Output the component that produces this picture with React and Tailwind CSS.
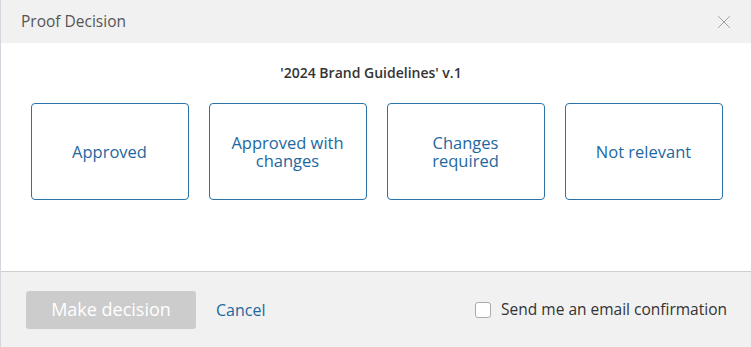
import { X } from "lucide-react";

const options = ["Approved", "Approved with changes", "Changes required", "Not relevant"];

export default function App() {
  return (
    <div
      className="flex h-[347px] w-[751px] flex-col overflow-hidden border-l border-gray-300 bg-white"
      style={{ fontFamily: "'Open Sans', sans-serif" }}
    >
      {/* Header */}
      <div className="flex h-[43px] items-center justify-between bg-[#f1f1f1] pl-[20px] pr-[16px]">
        <span className="text-[15.5px] text-[#555]">Proof Decision</span>
        <X className="h-[22px] w-[22px] text-[#999]" strokeWidth={1} />
      </div>

      {/* Body */}
      <div className="flex flex-1 flex-col items-center pt-[19px]">
        <h2 className="pr-[10px] text-[14px] font-semibold leading-[22px] text-[#333]">
          '2024 Brand Guidelines' v.1
        </h2>
        <div className="mt-[19px] flex gap-[20px] pl-[1px]">
          {options.map((o) => (
            <button
              key={o}
              className="flex h-[97px] w-[158px] items-center justify-center rounded-[4px] border border-[#2a73a8] px-[18px] text-center text-[16.5px] leading-[18px] text-[#1d68a0]"
            >
              {o}
            </button>
          ))}
        </div>
      </div>

      {/* Footer */}
      <div className="flex h-[76px] items-center border-t border-[#d0d0d0] bg-[#f1f1f1] pl-[25px] pr-[24px]">
        <button className="h-[38px] w-[170px] rounded-[3px] bg-[#cccccc] text-[18px] text-white">
          Make decision
        </button>
        <a className="ml-[20px] text-[16px] text-[#1d68a0]">Cancel</a>
        <label className="ml-auto flex items-center gap-[10px] text-[15.5px] text-[#333]">
          <span className="h-[16px] w-[16px] rounded-[3px] border border-[#aaa] bg-white" />
          Send me an email confirmation
        </label>
      </div>
    </div>
  );
}
